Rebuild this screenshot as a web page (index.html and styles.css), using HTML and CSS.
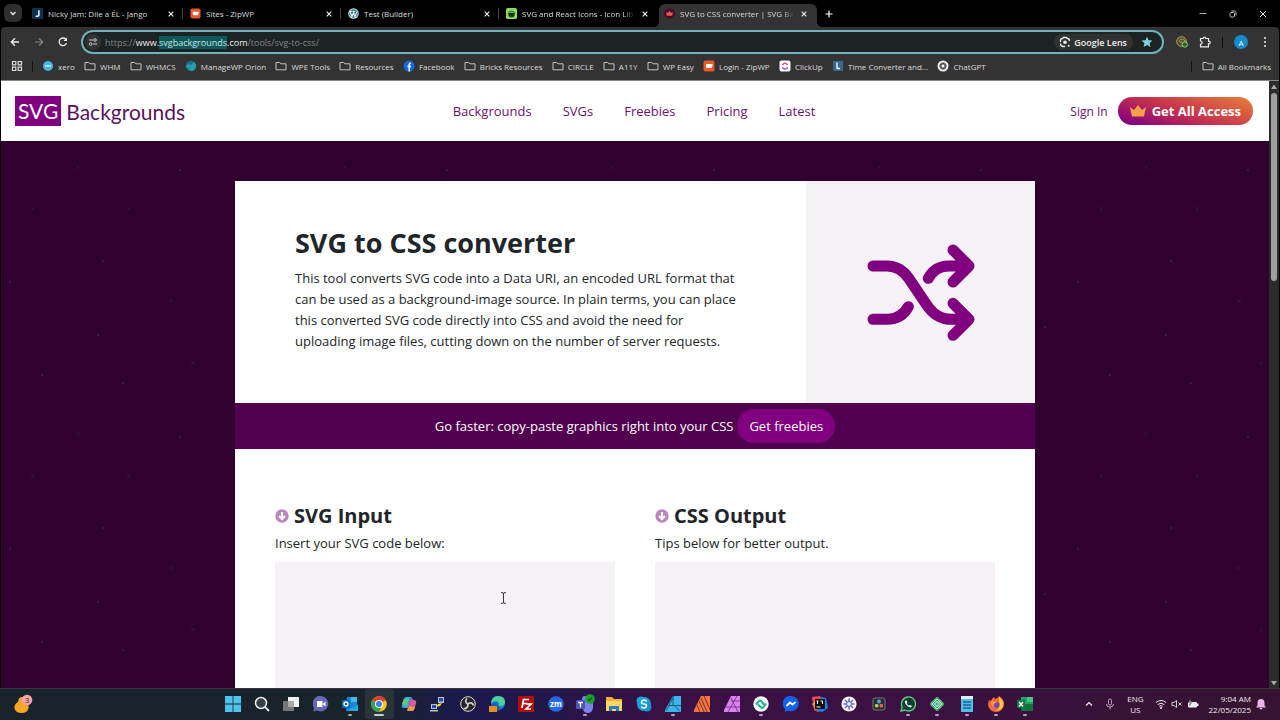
FILE: index.html
```
<!DOCTYPE html>
<html lang="en">
<head>
    <meta charset="UTF-8">
    <meta name="viewport" content="width=device-width, initial-scale=1.0">
    <title>SVG to CSS converter | SVG Backgrounds</title>
    <link rel="stylesheet" href="styles.css">
</head>
<body>
    <!-- Shared icons -->
    <svg class="defs" width="0" height="0" aria-hidden="true">
        <symbol id="close" viewBox="0 0 10 10"><path d="M2.7 2.7l4.6 4.6M7.3 2.7L2.7 7.3" stroke="#eee" stroke-width="1.2"/></symbol>
        <symbol id="folder" viewBox="0 0 12 12"><path d="M1 2.5h3.6L6 3.8h5v6H1z" fill="none" stroke="#c4c4c4" stroke-width="1" stroke-linejoin="round"/></symbol>
        <symbol id="zipwp" viewBox="0 0 12 12"><rect x=".5" y=".5" width="11" height="11" rx="2" fill="#e9592b"/><path d="M3 4h6.5v1.5L8.500 8H4.500C3 8 3 6 3 4z" fill="#fff"/></symbol>
        <symbol id="down" viewBox="0 0 14 14"><circle cx="7" cy="7" r="6.700" fill="#b888b8"/><path d="M7 3v7M4 7l3 3 3-3" fill="none" stroke="#fff" stroke-width="2"/></symbol>
    </svg>

    <!-- Browser tabs -->
    <div class="tabs">
        <button class="tab-search" aria-label="Search tabs"><svg width="10" height="10" viewBox="0 0 10 10"><path d="M2.500 4L5 6.500 7.500 4" fill="none" stroke="#eee" stroke-width="1.300"/></svg></button>
        <div class="tab">
            <svg class="fav" viewBox="0 0 12 12"><rect width="12" height="12" rx="1" fill="#12304f"/><path d="M7.500 2.500V7.500q0 2-3.500 1.500" fill="none" stroke="#fff" stroke-width="1.600"/></svg>
            <span>Nicky Jam: Dile a ÉL - Jango</span>
            <button aria-label="Close tab"><svg width="10" height="10"><use href="#close"/></svg></button>
        </div>
        <div class="tab">
            <svg class="fav"><use href="#zipwp"/></svg>
            <span>Sites - ZipWP</span>
            <button aria-label="Close tab"><svg width="10" height="10"><use href="#close"/></svg></button>
        </div>
        <div class="tab">
            <svg class="fav" viewBox="0 0 12 12"><circle cx="6" cy="6" r="5.700" fill="#dcebf3"/><circle cx="6" cy="6" r="4.700" fill="#21759b"/><path d="M2 3.500l2.300 6L6 5l1.700 4.500L9.500 4M1.500 3.500h3M5 3.500h3" fill="none" stroke="#fff" stroke-width="1.100"/></svg>
            <span>Test (Builder)</span>
            <button aria-label="Close tab"><svg width="10" height="10"><use href="#close"/></svg></button>
        </div>
        <div class="tab no-line">
            <svg class="fav" viewBox="0 0 12 12"><rect width="12" height="12" rx="2" fill="#8bdc5c"/><rect x="2.500" y="3" width="7" height="7" rx="3" fill="#163a12"/><path d="M3.500 4.500h5" stroke="#d8f6c4" stroke-width="1"/></svg>
            <span>SVG and React Icons - Icon Lib</span>
            <button aria-label="Close tab"><svg width="10" height="10"><use href="#close"/></svg></button>
        </div>
        <div class="tab active">
            <svg class="fav" viewBox="0 0 12 12"><circle cx="6" cy="6" r="5.800" fill="#4b0a28"/><path d="M2.500 4l1.900 1.500L6 3l1.600 2.500L9.500 4 9 8.500H3z" fill="#ee5a4e"/></svg>
            <span>SVG to CSS converter | SVG Ba</span>
            <button aria-label="Close tab"><svg width="10" height="10"><use href="#close"/></svg></button>
        </div>
        <button class="new-tab" aria-label="New tab"><svg width="10" height="10" viewBox="0 0 10 10"><path d="M5 1.500v7M1.500 5h7" stroke="#fff" stroke-width="1.200"/></svg></button>
        <div class="window-buttons">
            <button aria-label="Minimize"><svg width="10" height="10" viewBox="0 0 10 10"><path d="M1.500 4.500h7" stroke="#aaa"/></svg></button>
            <button aria-label="Restore"><svg width="10" height="10" viewBox="0 0 10 10"><rect x="2" y="3.500" width="4.500" height="4.500" rx="1" fill="none" stroke="#bbb"/><path d="M3.500 2h3Q8 2 8 3.500v3" fill="none" stroke="#bbb"/></svg></button>
            <button aria-label="Close"><svg width="10" height="10" viewBox="0 0 10 10"><path d="M2 2l6 6M8 2L2 8" stroke="#eee"/></svg></button>
        </div>
    </div>

    <!-- Toolbar -->
    <div class="toolbar">
        <button aria-label="Back"><svg width="12" height="12" viewBox="0 0 12 12"><path d="M10 6H2.500M6 2.300L2.300 6 6 9.700" fill="none" stroke="#eee" stroke-width="1.300"/></svg></button>
        <button aria-label="Forward"><svg width="12" height="12" viewBox="0 0 12 12"><path d="M2 6h7.500M6 2.300L9.700 6 6 9.700" fill="none" stroke="#888" stroke-width="1.200"/></svg></button>
        <button aria-label="Reload"><svg width="12" height="12" viewBox="0 0 12 12"><path d="M9.500 7.200A3.800 3.800 0 1 1 8.800 3.300" fill="none" stroke="#eee" stroke-width="1.300"/><path d="M10 1.500V5H6.500z" fill="#eee"/></svg></button>
        <div class="address">
            <span class="site-info"><svg width="10" height="10" viewBox="0 0 10 10"><path d="M1 3h4M5 7h4" stroke="#ccc" stroke-width="1.100"/><circle cx="7" cy="3" r="1.300" fill="none" stroke="#ccc"/><circle cx="2.700" cy="7" r="1.300" fill="none" stroke="#ccc"/></svg></span>
            <div class="url">https://<b>www.<mark>svgbackgrounds</mark>.com</b>/tools/svg-to-css/</div>
            <button class="lens"><svg width="12" height="12" viewBox="0 0 12 12"><path d="M1.500 6V4.500Q1.500 2.500 3.500 2.500L4.500 1.500h3L8.500 2.500Q10.500 2.500 10.500 5M1.500 7.500q0 3 3 3H6" fill="none" stroke="#eee" stroke-width="1.300"/><circle cx="6" cy="6.300" r="1.800" fill="#eee"/><circle cx="9.700" cy="9.700" r="1" fill="#eee"/></svg>Google Lens</button>
            <button class="star" aria-label="Edit bookmark"><svg width="12" height="12" viewBox="0 0 12 12"><path d="M6 .7l1.600 3.500 3.800.4-2.800 2.600.8 3.800L6 9.100 2.600 11l.8-3.800L.6 4.600l3.800-.4z" fill="#7bd5de"/></svg></button>
        </div>
        <div class="extensions">
            <button aria-label="Extension"><svg width="12" height="12" viewBox="0 0 12 12"><circle cx="5.500" cy="5.500" r="4.800" fill="#4f4a32" stroke="#b5a65b"/><path d="M3 6q0-3 3-3t3 3M4.500 7q0-2 2-2" fill="none" stroke="#b5a65b" stroke-width=".8"/><circle cx="8.800" cy="8.500" r="2.700" fill="#3a5b35" stroke="#7ddb68"/></svg></button>
            <button aria-label="Extensions"><svg width="12" height="12" viewBox="0 0 12 12"><path d="M1.500 2.500H4.200Q4.200 1 5.500 1T6.800 2.500H9.500V5.200Q11.200 5.200 11.200 6.500T9.500 7.800V10.800H1.500V8.300Q3.200 8 3.200 6.600T1.500 5z" fill="none" stroke="#eee" stroke-width="1.200"/></svg></button>
            <i class="divider"></i>
            <button class="avatar">A</button>
            <button aria-label="Menu"><svg width="12" height="12" viewBox="0 0 12 12"><g fill="#eee"><circle cx="6" cy="2" r="1"/><circle cx="6" cy="6" r="1"/><circle cx="6" cy="10" r="1"/></g></svg></button>
        </div>
    </div>

    <!-- Bookmarks -->
    <nav class="bookmarks">
        <button class="apps" aria-label="Apps"><svg width="12" height="12" viewBox="0 0 12 12"><path d="M1.500 1.500h3.300v3.300H1.500zM7.200 1.500h3.300v3.300H7.200zM1.500 7.200h3.300v3.300H1.500zM7.200 7.200h3.300v3.300H7.200z" fill="none" stroke="#ddd" stroke-width="1.200"/></svg></button>
        <i class="divider"></i>
        <div class="links">
            <a href="#"><svg viewBox="0 0 12 12"><circle cx="6" cy="6" r="5" fill="#4ab5e0"/><path d="M3 6h6" stroke="#c9edfa" stroke-width="1.500"/></svg>xero</a>
            <a href="#"><svg><use href="#folder"/></svg>WHM</a>
            <a href="#"><svg><use href="#folder"/></svg>WHMCS</a>
            <a href="#"><svg viewBox="0 0 12 12"><circle cx="6" cy="6" r="5.300" fill="#1c7185"/><path d="M1 6l3-2 2 1 3-3 2 3A5 5 0 0 1 6 11z" fill="#299bb0"/></svg>ManageWP Orion</a>
            <a href="#"><svg><use href="#folder"/></svg>WPE Tools</a>
            <a href="#"><svg><use href="#folder"/></svg>Resources</a>
            <a href="#"><svg viewBox="0 0 12 12"><circle cx="6" cy="6" r="5.500" fill="#1268e8"/><path d="M8 3.200H7.200Q6.300 3.200 6.300 4.200V11.500M4.500 6.500H8" fill="none" stroke="#fff" stroke-width="1.500"/></svg>Facebook</a>
            <a href="#"><svg><use href="#folder"/></svg>Bricks Resources</a>
            <a href="#"><svg><use href="#folder"/></svg>CIRCLE</a>
            <a href="#"><svg><use href="#folder"/></svg>A11Y</a>
            <a href="#"><svg><use href="#folder"/></svg>WP Easy</a>
            <a href="#"><svg><use href="#zipwp"/></svg>Login - ZipWP</a>
            <a href="#"><svg viewBox="0 0 12 12"><rect x=".5" y=".5" width="11" height="11" rx="2" fill="#fff"/><path d="M3.500 5Q6 1.500 8.500 5" fill="none" stroke="#e8408d" stroke-width="1.300"/><path d="M3 7.500q3 3 6 0" fill="none" stroke="#7b55e8" stroke-width="1.300"/></svg>ClickUp</a>
            <a href="#"><svg viewBox="0 0 12 12"><rect x="1" y="1" width="10" height="10" fill="#35698d"/><path d="M5 2.500v6h3" fill="none" stroke="#fff" stroke-width="1.300"/></svg>Time Converter and...</a>
            <a href="#"><svg viewBox="0 0 12 12"><circle cx="6" cy="6" r="5.500" fill="#f5f5f5"/><g fill="none" stroke="#333" stroke-width=".7"><ellipse cx="6" cy="6" rx="3.500" ry="2"/><ellipse cx="6" cy="6" rx="3.500" ry="2" transform="rotate(60 6 6)"/><ellipse cx="6" cy="6" rx="3.500" ry="2" transform="rotate(120 6 6)"/></g></svg>ChatGPT</a>
        </div>
        <i class="divider"></i>
        <a class="all" href="#"><svg><use href="#folder"/></svg>All Bookmarks</a>
    </nav>

    <!-- Web page -->
    <div class="viewport">
        <div class="page">
            <header class="site-header">
                <a class="logo" href="#"><span>SVG</span>Backgrounds</a>
                <nav class="menu">
                    <a href="#">Backgrounds</a>
                    <a href="#">SVGs</a>
                    <a href="#">Freebies</a>
                    <a href="#">Pricing</a>
                    <a href="#">Latest</a>
                </nav>
                <div class="account">
                    <a href="#">Sign In</a>
                    <button class="access"><svg width="16" height="12" viewBox="0 0 16 12"><path d="M0 2l4 3L8 0l4 5 4-3-2 9.500H2z" fill="#f5a04a"/></svg>Get All Access</button>
                </div>
            </header>
            <main class="content">
                <section class="hero">
                    <div class="intro">
                        <h1>SVG to CSS converter</h1>
                        <p>This tool converts SVG code into a Data URI, an encoded URL format that can be used as a background-image source. In plain terms, you can place this converted SVG code directly into CSS and avoid the need for uploading image files, cutting down on the number of server requests.</p>
                    </div>
                    <div class="picture">
                        <svg width="108" height="97" viewBox="80 70 324 291" fill="none" stroke="#800080" stroke-width="33" stroke-linecap="round" stroke-linejoin="round">
                            <path d="M98 136h42c31 0 50 14 66 38l50 74c20 31 42 48 78 48h46M98 296h42c29 0 50-12 64-38M264 173c14-26 36-37 62-37h54M338 88l48 48-48 48M338 248l48 48-48 48"/>
                        </svg>
                    </div>
                </section>
                <section class="banner">
                    <span>Go faster: copy-paste graphics right into your CSS</span>
                    <button>Get freebies</button>
                </section>
                <section class="converter">
                    <div class="field">
                        <h2><svg width="14" height="14"><use href="#down"/></svg>SVG Input</h2>
                        <label for="input">Insert your SVG code below:</label>
                        <textarea id="input"></textarea>
                        <svg class="cursor" width="7" height="12" viewBox="0 0 7 12"><path d="M1 .7h2l.5.5.5-.5h2M3.500 1v10M1 11.300h2l.5-.5.5.5h2" fill="none" stroke="#222" stroke-width=".9"/></svg>
                    </div>
                    <div class="field">
                        <h2><svg width="14" height="14"><use href="#down"/></svg>CSS Output</h2>
                        <label for="output">Tips below for better output.</label>
                        <textarea id="output" readonly></textarea>
                    </div>
                </section>
            </main>
        </div>
        <div class="scrollbar">
            <svg width="8" height="8" viewBox="0 0 8 8"><path d="M4 1.500L7 6H1z" fill="#aaa"/></svg>
            <div class="track"><div class="thumb"></div></div>
            <svg width="8" height="8" viewBox="0 0 8 8"><path d="M4 6.500L7 2H1z" fill="#aaa"/></svg>
        </div>
    </div>

    <!-- Taskbar -->
    <footer class="taskbar">
        <div class="widget">
            <svg width="20" height="20" viewBox="0 0 20 20"><path d="M9 3q3 0 3.500 4.500 4 3 3 7Q14 19 8.500 19T1.500 14.500q-.8-4 3.500-6.500Q5.500 3 9 3z" fill="#f5a623"/><circle cx="14" cy="6" r="5.300" fill="#f3a5a5"/><text x="14" y="9" text-anchor="middle" font-size="8" fill="#3b1a1a">3</text></svg>
        </div>
        <div class="apps-row">
            <button aria-label="Start"><svg viewBox="0 0 16 16"><path d="M0 0h7.600v7.600H0zM8.400 0H16v7.600H8.400zM0 8.400h7.600V16H0zM8.400 8.400H16V16H8.400z" fill="#4cc4f0"/></svg></button>
            <button aria-label="Search"><svg viewBox="0 0 16 16"><circle cx="7" cy="7" r="5.500" fill="#34424a" stroke="#eee" stroke-width="1.500"/><path d="M11 11l4 4" stroke="#eee" stroke-width="1.800"/></svg></button>
            <button aria-label="Task view"><svg viewBox="0 0 16 16"><path d="M5 1h11v10H5z" fill="#f2f2f2"/><path d="M0 5h11v10H0z" fill="#777"/><path d="M5 5h6v6H5z" fill="#aaa"/></svg></button>
            <button aria-label="Chat"><svg viewBox="0 0 16 16"><path d="M8 0a7.700 7.700 0 1 1-4 14.500L.5 15.500 1 12A7.700 7.700 0 0 1 8 0z" fill="#6568b8"/><path d="M4 5h5.500v6H4zM10 7.500L12.500 5.500v5L10 8.500z" fill="#fff"/></svg></button>
            <button class="open" aria-label="Outlook"><svg viewBox="0 0 16 16"><path d="M5 1h10v7l1 1v6H4z" fill="#1685d3"/><path d="M9 1h6v5H9z" fill="#45b8ee"/><path d="M5 15l11-6v6z" fill="#2aa5e5"/><rect y="4" width="8" height="8" rx="1" fill="#0868b6"/><circle cx="4" cy="8" r="2" fill="none" stroke="#fff" stroke-width="1.300"/></svg></button>
            <button class="open current" aria-label="Chrome"><svg viewBox="0 0 16 16"><circle cx="8" cy="8" r="7.800" fill="#f8c51c"/><path d="M8 8L1.200 4.100A7.800 7.800 0 0 1 14.800 4.200z" fill="#e33b2e"/><path d="M1.200 4.100A7.800 7.800 0 0 0 8 15.800L11 10z" fill="#2da44e"/><circle cx="8" cy="8" r="4" fill="#fff"/><circle cx="8" cy="8" r="3" fill="#3d7de8"/></svg></button>
            <button aria-label="Copilot"><svg viewBox="0 0 16 16"><path d="M5 1h5l-3 11H3Q0 12 1 8.500l1.500-5Q3.200 1 5 1z" fill="#35a6df"/><path d="M1 8l2-5 5-1-2 8z" fill="#63c87a"/><path d="M9 4h4q3 0 2 3.500l-1.500 5Q12.700 15 11 15H6z" fill="#dc5b9a"/><path d="M6 15l2-5 6 1q-1 4-3 4z" fill="#f59b44"/><path d="M10 1q1.500 0 2 3H9z" fill="#5b72e8"/></svg></button>
            <button aria-label="WinSCP"><svg viewBox="0 0 16 16"><path d="M8 1h6v6H8zM1 8h6v5H1zM0 14h8v1.500H0z" fill="#b9c4d0"/><path d="M9 2h4v3.500H9zM2 9h4v3H2z" fill="#2846b5"/><path d="M12 7l-2 3-4 1 2-3z" fill="#f1df2b"/></svg></button>
            <button aria-label="OBS"><svg viewBox="0 0 16 16"><circle cx="8" cy="8" r="7.300" fill="#252429" stroke="#ddd"/><path d="M8 8Q4 6 7 2.500M8 8q4-3 5.500 1.500M8 8q0 5-4.500 4.500" fill="none" stroke="#ccc" stroke-width="1.800"/></svg></button>
            <button aria-label="Edge"><svg viewBox="0 0 16 16"><circle cx="9" cy="7" r="7" fill="#1686d0"/><path d="M2 7Q3 0 9 0q7 0 7 6 0 4-5 4-2-1-1-3-2-4-8 0z" fill="#4dd0a0"/><path d="M3 8q4-3 6 1l3 5q-6 2-9-1z" fill="#1461aa"/><path d="M0 10h8v6H0z" fill="#e88b26"/></svg></button>
            <button aria-label="FileZilla"><svg viewBox="0 0 16 16"><rect width="16" height="16" rx="1" fill="#b40d0d"/><path d="M4 12L5.500 3.500H11M5 7.500h4M8 8h5l-5 5h5" fill="none" stroke="#fff" stroke-width="1.700"/></svg></button>
            <button aria-label="Zoom"><svg viewBox="0 0 16 16"><circle cx="8" cy="8" r="7.800" fill="#2468e8"/><text x="8" y="11" text-anchor="middle" font-size="8" font-weight="bold" fill="#fff">zm</text></svg></button>
            <button class="open" aria-label="Teams"><svg class="teams" viewBox="0 0 20 20"><path d="M8 6h10v8q-1 5-5 5-5 0-5-5z" fill="#7b83eb"/><circle cx="10" cy="5" r="3" fill="#7b83eb"/><rect x="1" y="6" width="9" height="9" rx="1" fill="#4b53bc"/><path d="M3 8.500h5M5.500 8.500v5" stroke="#fff" stroke-width="1.300"/><circle cx="15" cy="5" r="4.800" fill="#18a32b"/><path d="M13 5l1.500 1.500L17 3.500" fill="none" stroke="#0b5b17" stroke-width="1.200"/></svg></button>
            <button aria-label="Explorer"><svg viewBox="0 0 16 16"><path d="M0 1h6l2 2h8v12H0z" fill="#edb23a"/><path d="M0 5h16v10H0z" fill="#fbd866"/><path d="M3 10h10v5H3z" fill="#2d7cc5"/><path d="M6 13h4v2H6z" fill="#fbd866"/></svg></button>
            <button aria-label="Skype"><svg viewBox="0 0 16 16"><circle cx="8" cy="8" r="7" fill="#17a3dc"/><circle cx="5" cy="5" r="4.500" fill="#17a3dc"/><circle cx="11" cy="11" r="4.500" fill="#1592cf"/><path d="M10.500 5.500Q10 4 8 4T5.500 6t2.500 2 2.500 2T8 12t-2.700-1.500" fill="none" stroke="#fff" stroke-width="1.500"/></svg></button>
            <button class="open" aria-label="Designer"><svg viewBox="0 0 16 16"><path d="M8 0h8v16H0v-2z" fill="#3bb5e8"/><path d="M9 0L1 15M8 2v7.500h8M8 9.500H4M9 9.500l6 6" fill="none" stroke="#14597c" stroke-width="1"/></svg></button>
            <button aria-label="Publisher"><svg viewBox="0 0 16 16"><path d="M7 0h9v16H0v-2z" fill="#ef7743"/><path d="M5 5l5 11M7 2l6 14M3 9l3 7M10 0l6 14" stroke="#8b2d17" stroke-width="1"/></svg></button>
            <button aria-label="Photo"><svg viewBox="0 0 16 16"><path d="M7 0h9v16H0v-2z" fill="#d982f1"/><path d="M7 2l7 14M13 0L4 16M2 11h14M7 5h9" stroke="#7c3d92" stroke-width="1"/></svg></button>
            <button class="open" aria-label="Wave"><svg viewBox="0 0 16 16"><circle cx="8" cy="8" r="7.700" fill="#f4fafa"/><path d="M3 8.500l3-3.500q1-1 2 0l3 3.500M5 8.500l3 3q1 .8 2 0l3-4" fill="none" stroke="#24ad98" stroke-width="2"/></svg></button>
            <button aria-label="Messenger"><svg viewBox="0 0 16 16"><path d="M8 0a8 7.600 0 1 1-3 14.700L2 16v-3A7.600 7.600 0 0 1 8 0z" fill="#1261ef"/><path d="M3.500 10L7 6.500l2.500 2L12.500 6" fill="none" stroke="#fff" stroke-width="1.800"/></svg></button>
            <button aria-label="IntelliJ"><svg viewBox="0 0 16 16"><path d="M0 1l8-1 4 8-6 8-4-2z" fill="#f1495a"/><path d="M9 1l5 1 2 10-6 4-5-1z" fill="#1583df"/><path d="M0 8l4-4v10z" fill="#ef9140"/><path d="M3 3h10v10H3z" fill="#111"/><path d="M4.500 5h2M5.500 5v3M8.500 5h2v3M4.500 11h4" fill="none" stroke="#fff"/></svg></button>
            <button aria-label="Loom"><svg viewBox="0 0 16 16"><circle cx="8" cy="8" r="7.600" fill="#f5f4ff"/><path d="M8 2.500v11M2.500 8h11M4 4l8 8M12 4l-8 8" stroke="#676bc9" stroke-width="1.600"/><circle cx="8" cy="8" r="2.300" fill="#f5f4ff" stroke="#676bc9"/></svg></button>
            <button aria-label="Resolve"><svg viewBox="0 0 16 16"><rect x="2" y="2" width="12" height="12" rx="2" fill="#252b31" stroke="#777"/><circle cx="8" cy="5.500" r="1.900" fill="#4faed8"/><circle cx="5.700" cy="9.700" r="1.900" fill="#b1cc55"/><circle cx="10.300" cy="9.700" r="1.900" fill="#df6658"/></svg></button>
            <button class="open" aria-label="WhatsApp"><svg viewBox="0 0 16 16"><path d="M1 15l1.200-4A7 7 0 1 1 5 14z" fill="#123e32" stroke="#5dd184" stroke-width="1.300"/><path d="M5.500 4.500q-1.500 1 .5 4t5 3l1-1.500-2-1-1 .8q-1.500-.8-2.200-2.300l.7-1-1-2z" fill="#e6f5ea"/></svg></button>
            <button class="open" aria-label="Diamond"><svg viewBox="0 0 16 16"><rect x="2.500" y="2.500" width="11" height="11" rx="2" transform="rotate(45 8 8)" fill="#49b67b"/><path d="M8 3l5 5-5 5-5-5zM8 5.500L10.500 8 8 10.500 5.500 8z" fill="none" stroke="#c9f0d8"/></svg></button>
            <button class="open" aria-label="Notepad"><svg viewBox="0 0 16 16"><path d="M2 1h12v15H2z" fill="#53bfe9"/><path d="M2 0h12v3H2z" fill="#d9f1fb"/><path d="M4 6h8M4 9h8M4 12h8" stroke="#17638c" stroke-width="1.300"/></svg></button>
            <button class="open" aria-label="Firefox"><svg viewBox="0 0 16 16"><path d="M1 4l2 1q1-3 3-4l1 2q3-.5 4-3 5 3 5 8a8 8 0 0 1-16 0z" fill="#f66a35"/><path d="M11 1q4 3 4.500 7-.5 6-7.500 7 6-5 3-10z" fill="#ffc93c"/><circle cx="8" cy="9" r="3.300" fill="#7343c8"/><path d="M3 6q3-2 6 0l-3 2q-1 2 2 4-5-1-5-6z" fill="#ff9640"/></svg></button>
            <button class="open" aria-label="Excel"><svg viewBox="0 0 16 16"><path d="M4 1h12v14H4z" fill="#21a366"/><path d="M10 1h6v5h-6z" fill="#43c686"/><path d="M4 8h12v7H4z" fill="#13703f"/><rect y="4" width="8" height="8" fill="#107c41"/><path d="M2 6l4 4.500M6 6l-4 4.500" stroke="#fff" stroke-width="1.300"/></svg></button>
        </div>
        <div class="tray">
            <svg width="10" height="10" viewBox="0 0 10 10"><path d="M2 6.500l3-3 3 3" fill="none" stroke="#eee" stroke-width="1.200"/></svg>
            <svg width="12" height="12" viewBox="0 0 12 12"><rect x="4.500" y="1" width="3" height="6" rx="1.500" fill="none" stroke="#b9a8bb"/><path d="M2.500 6q0 3 3.500 3t3.500-3M6 9v2.500" fill="none" stroke="#b9a8bb"/></svg>
            <div class="lang">ENG<br>US</div>
            <div class="status">
                <svg width="12" height="12" viewBox="0 0 12 12"><path d="M1 4.500q5-4 10 0M2.700 6.500q3.300-2.500 6.600 0M4.300 8.300q1.700-1.200 3.400 0" fill="none" stroke="#eee"/><circle cx="6" cy="10" r="1" fill="#eee"/></svg>
                <svg width="12" height="12" viewBox="0 0 12 12"><path d="M1 4.500h2l2.500-2v7L3 7.500H1zM7.500 4.500l3 3M10.500 4.500l-3 3" fill="none" stroke="#ddd" stroke-width=".9"/></svg>
                <svg width="12" height="12" viewBox="0 0 12 12"><rect x="1" y="4" width="9" height="5.500" rx="1" fill="#eee"/><path d="M10 5.500h1.500V8H10z" fill="#eee"/><path d="M3.500 1L1.500 4.500h2L2.500 7.500l3-4h-2z" fill="#eee" stroke="#35142f" stroke-width=".5"/></svg>
            </div>
            <div class="clock">9:04 AM<br>22/05/2025</div>
            <svg width="12" height="12" viewBox="0 0 12 12"><path d="M1 9.500l1.500-2V5Q2.500 1 6 1t3.500 4v2.500l1.500 2zM4.500 10h3q-.5 1.500-1.500 1.500T4.500 10z" fill="#e8b4ea"/></svg>
        </div>
    </footer>
</body>
</html>
```
FILE: styles.css
```
/* General */
* {
    box-sizing: border-box;
}

body {
    margin: 0;
    height: 100vh;
    display: flex;
    flex-direction: column;
    overflow: hidden;
    background: #000;
    color: #212529;
    font-family: "Open Sans", "Noto Sans", sans-serif;
}

button {
    padding: 0;
    border: none;
    background: none;
    color: inherit;
    font-family: inherit;
    display: flex;
    align-items: center;
    justify-content: center;
}

a {
    color: inherit;
    text-decoration: none;
}

svg {
    flex: none;
    display: block;
}

.defs {
    position: absolute;
}

.divider {
    width: 1px;
    height: 11px;
    background: #111;
}

/* Tabs */
.tabs {
    height: 27px;
    padding: 4px 12px 0 4px;
    display: flex;
    color: #ddd;
    font-size: 8px;
}

.tab-search {
    width: 18px;
    height: 18px;
    margin-right: 5px;
    border-radius: 6px;
    background: #2f2f2f;
}

.tab {
    position: relative;
    flex: 0 1 158px;
    min-width: 0;
    height: 19px;
    padding: 0 9px 0 5px;
    display: flex;
    align-items: center;
    gap: 5px;
}

.tab:not(.active):not(.no-line)::after {
    content: "";
    position: absolute;
    right: 2px;
    top: 4px;
    width: 1px;
    height: 11px;
    background: #444;
}

.tab .fav {
    width: 11px;
    height: 11px;
}

.tab span {
    flex: 1;
    white-space: nowrap;
}

/* The longest titles fade out before the close button */
.no-line span,
.active span {
    -webkit-mask-image: linear-gradient(to left, transparent, #000 12px);
    mask-image: linear-gradient(to left, transparent, #000 12px);
}

.tab.active {
    height: 23px;
    padding-bottom: 4px;
    border-radius: 6px 6px 0 0;
    background: #333;
}

.active::before,
.active::after {
    content: "";
    position: absolute;
    bottom: 0;
    width: 5px;
    height: 5px;
}

.active::before {
    left: -5px;
    background: radial-gradient(circle at 0 0, transparent 5px, #333 5px);
}

.active::after {
    right: -5px;
    background: radial-gradient(circle at 100% 0, transparent 5px, #333 5px);
}

.new-tab {
    width: 20px;
    height: 19px;
    margin-left: 2px;
}

.window-buttons {
    height: 19px;
    margin-left: auto;
    display: flex;
    gap: 20px;
}

/* Toolbar */
.toolbar {
    height: 30px;
    margin: 0 1px;
    padding: 0 8px;
    display: flex;
    align-items: center;
    gap: 12px;
    border-radius: 4px 4px 0 0;
    background: #333;
}

.address {
    flex: 1;
    height: 24px;
    padding: 0 9px 0 2px;
    display: flex;
    align-items: center;
    border: 2px solid #6fb2b8;
    border-radius: 12px;
    background: #1d2223;
}

.site-info {
    width: 16px;
    height: 16px;
    margin-right: 4px;
    display: flex;
    align-items: center;
    justify-content: center;
    border-radius: 50%;
    background: #333;
}

.url {
    flex: 1;
    color: #858989;
    font-size: 9px;
}

.url b {
    color: #eee;
    font-weight: normal;
}

.url mark {
    background: #10575c;
    color: #c5e5e5;
}

.lens {
    height: 16px;
    margin-right: 8px;
    padding: 0 6px 0 5px;
    gap: 3px;
    border-radius: 8px;
    background: #303232;
    color: #eee;
    font-size: 9px;
    font-weight: 600;
}

.extensions {
    display: flex;
    align-items: center;
    gap: 11px;
}

.avatar {
    width: 14px;
    height: 14px;
    border-radius: 50%;
    background: #168acb;
    color: #fff;
    font-size: 8px;
}

/* Bookmarks */
.bookmarks {
    height: 23px;
    margin: 0 1px;
    padding: 0 8px 5px 10px;
    display: flex;
    align-items: center;
    background: #333;
    color: #ddd;
    font-size: 8px;
}

.bookmarks a {
    display: flex;
    align-items: center;
    gap: 4px;
    white-space: nowrap;
}

.bookmarks a svg {
    width: 12px;
    height: 12px;
}

.apps {
    margin-right: 9px;
}

.links {
    flex: 1;
    margin: 0 205px 0 9px;
    display: flex;
    justify-content: space-between;
}

.all {
    margin-left: 10px;
}

/* Web page */
.viewport {
    flex: 1;
    min-height: 0;
    margin: 0 1px;
    display: flex;
    border-top: 1px solid #888;
}

.page {
    flex: 1;
    overflow: hidden;
    background: #30002f url("data:image/svg+xml,%3Csvg xmlns='http://www.w3.org/2000/svg' width='267' height='267'%3E%3Cg fill='%23471d48'%3E%3Ccircle cx='102' cy='120' r='1'/%3E%3Ccircle cx='97' cy='194' r='1'/%3E%3Ccircle cx='122' cy='242' r='1'/%3E%3Ccircle cx='41' cy='234' r='1'/%3E%3Ccircle cx='179' cy='29' r='1'/%3E%3Ccircle cx='9' cy='141' r='1'/%3E%3Ccircle cx='243' cy='186' r='1'/%3E%3C/g%3E%3Cpath d='M30 66l4 4m0-4l-4 4M126 66l4 4m0-4l-4 4M75 24l4 4m0-4l-4 4M168 158l4 4m0-4l-4 4M190 220l4 4m0-4l-4 4' stroke='%233b0e3c'/%3E%3C/svg%3E") 0 60px;
}

.site-header {
    height: 60px;
    padding: 0 16px 0 14px;
    display: grid;
    grid-template-columns: 1fr auto 1fr;
    align-items: center;
    background: #fff;
    color: #6b126b;
    font-size: 13px;
}

.logo {
    display: flex;
    align-items: center;
    gap: 5px;
    color: #57145a;
    font-family: Lato, sans-serif;
    font-size: 21px;
}

.logo span {
    padding: 0 3px;
    background: #800080;
    color: #fff;
    line-height: 30px;
}

.menu {
    display: flex;
    gap: 31px;
}

.account {
    display: flex;
    align-items: center;
    justify-content: flex-end;
    gap: 10px;
    font-size: 12px;
}

.access {
    height: 28px;
    padding: 0 12px;
    gap: 6px;
    border-radius: 14px;
    background: linear-gradient(20deg, #800080 5%, #c42f50 45%, #e8803a);
    color: #fff;
    font-size: 13px;
    font-weight: bold;
}

.content {
    max-width: 800px;
    margin: 40px auto 0;
    background: #fff;
}

/* Hero */
.hero {
    min-height: 222px;
    display: grid;
    grid-template-columns: 5fr 2fr;
}

.intro {
    padding: 46px 60px 0;
}

.intro h1 {
    margin: 0 0 9px;
    font-size: 27px;
    line-height: 32px;
}

.intro p {
    margin: 0;
    font-size: 13px;
    line-height: 21px;
}

.picture {
    display: flex;
    align-items: center;
    justify-content: center;
    background: #f5f1f7;
}

.banner {
    min-height: 46px;
    display: flex;
    align-items: center;
    justify-content: center;
    gap: 4px;
    background: #50004f;
    color: #fff;
    font-size: 13px;
}

.banner button {
    height: 34px;
    padding: 0 12px;
    border-radius: 17px;
    background: #800080;
    font-size: 13px;
}

/* Converter */
.converter {
    padding: 50px 40px 0;
    display: grid;
    grid-template-columns: 1fr 1fr;
    gap: 40px;
}

.field {
    position: relative;
}

.field h2 {
    margin: 0;
    display: flex;
    align-items: center;
    gap: 5px;
    font-size: 20px;
    line-height: 34px;
}

.field label {
    display: block;
    font-size: 13px;
    line-height: 20px;
}

.field textarea {
    width: 100%;
    height: 240px;
    margin-top: 9px;
    padding: 10px;
    display: block;
    border: none;
    outline: none;
    resize: none;
    background: #f5f1f7;
}

.cursor {
    position: absolute;
    left: 225px;
    top: 93px;
}

/* Scrollbar */
.scrollbar {
    width: 10px;
    padding: 2px 0 1px;
    display: flex;
    flex-direction: column;
    align-items: center;
    background: #2c2c2c;
}

.track {
    flex: 1;
    width: 6px;
    padding-top: 2px;
}

.thumb {
    height: 32%;
    border-radius: 3px;
    background: #9f9f9f;
}

/* Taskbar */
.taskbar {
    height: 32px;
    padding-bottom: 1px;
    display: flex;
    align-items: center;
    border-top: 1px solid #3b3540;
    background: linear-gradient(to right, #18242a 0, #18242a 29%, #1b1a4c 36%, #241649 43%, #3b1145 52%, #3a1140 75%, #341430);
    color: #eee;
}

.widget {
    width: 218px;
    padding-left: 13px;
}

.apps-row {
    flex: 1;
    align-self: stretch;
    display: flex;
}

.apps-row button {
    position: relative;
    flex: 1;
}

.apps-row svg {
    width: 16px;
    height: 16px;
}

.apps-row .teams {
    width: 20px;
    height: 20px;
}

.apps-row .current {
    border-radius: 3px;
    background: #29343a;
}

.open::after {
    content: "";
    position: absolute;
    bottom: 3px;
    left: 50%;
    width: 4px;
    height: 2px;
    margin-left: -2px;
    border-radius: 1px;
    background: #aaa;
}

.current::after {
    width: 10px;
    margin-left: -5px;
    background: #ccc;
}

.tray {
    width: 240px;
    padding-right: 13px;
    display: flex;
    align-items: center;
    justify-content: flex-end;
    font-size: 8px;
    line-height: 11px;
}

.lang {
    margin: 0 11px;
    text-align: center;
}

.tray > svg:first-child {
    margin-right: 10px;
}

.status {
    display: flex;
    gap: 4px;
}

.clock {
    margin: 0 4px 0 10px;
    text-align: right;
}
```
